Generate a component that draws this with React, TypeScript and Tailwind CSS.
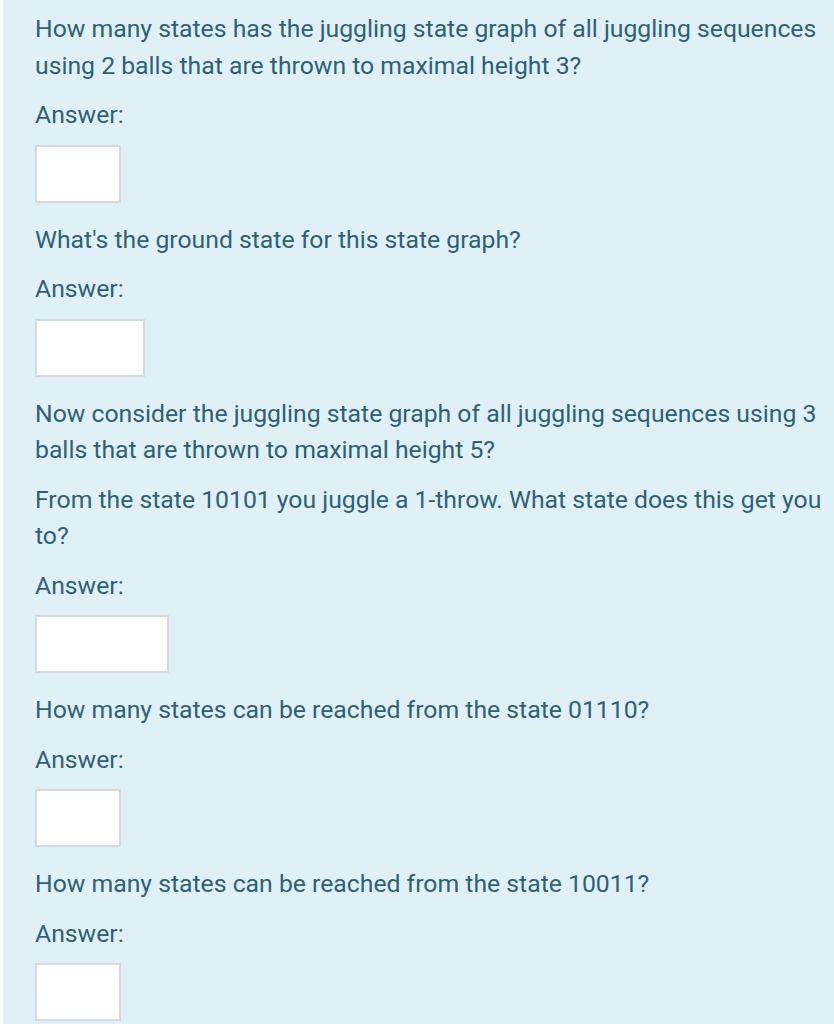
import * as React from 'react';

interface Part {
  text: string[];
  boxWidth: string;
}

const parts: Part[] = [
  {
    text: ['How many states has the juggling state graph of all juggling sequences using 2 balls that are thrown to maximal height 3?'],
    boxWidth: 'w-[86px]',
  },
  {
    text: ["What's the ground state for this state graph?"],
    boxWidth: 'w-[110px]',
  },
  {
    text: [
      'Now consider the juggling state graph of all juggling sequences using 3 balls that are thrown to maximal height 5?',
      'From the state 10101 you juggle a 1-throw. What state does this get you to?',
    ],
    boxWidth: 'w-[134px]',
  },
  {
    text: ['How many states can be reached from the state 01110?'],
    boxWidth: 'w-[86px]',
  },
  {
    text: ['How many states can be reached from the state 10011?'],
    boxWidth: 'w-[86px]',
  },
];

export default function App() {
  return (
    <div
      className="min-h-[1024px] w-[834px] overflow-hidden bg-white pl-[3px]"
      style={{ fontFamily: 'Roboto, "Liberation Sans", sans-serif' }}
    >
      <div className="min-h-[1024px] bg-[#dff1f7] pl-[32px] pr-[8px] pt-[11px] text-[24.75px] leading-[36.5px] text-[#2e6174]">
        {parts.map((part, i) => (
          <div key={i} className="mb-[19px]">
            {part.text.map((t, j) => (
              <p key={j} className="mb-[13px]">
                {t}
              </p>
            ))}
            <p className="mb-[11px]">Answer:</p>
            <div className={`${part.boxWidth} h-[58px] border-2 border-[#d4dade] bg-white`} />
          </div>
        ))}
      </div>
    </div>
  );
}
